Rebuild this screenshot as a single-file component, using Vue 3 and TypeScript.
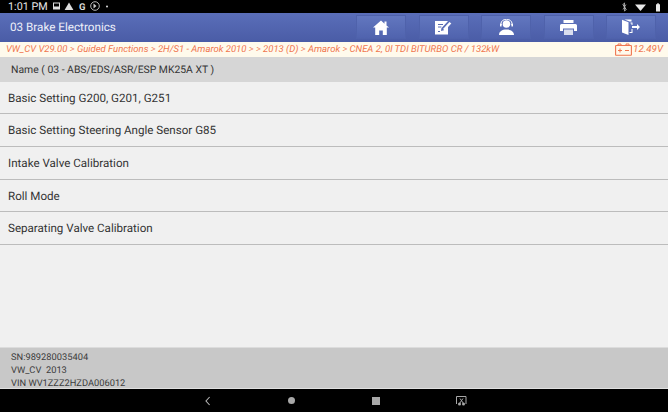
<script setup lang="ts">
const menuItems = [
  'Basic Setting G200, G201, G251',
  'Basic Setting Steering Angle Sensor G85',
  'Intake Valve Calibration',
  'Roll Mode',
  'Separating Valve Calibration',
]
const crumb =
  'VW_CV V29.00 > Guided Functions > 2H/S1 - Amarok 2010 > > 2013 (D) > Amarok > CNEA 2, 0l TDI BITURBO CR / 132kW'
const footerLines = ['SN:989280035404', 'VW_CV  2013', 'VIN WV1ZZZ2HZDA006012']
</script>

<template>
  <div class="screen">
    <div class="status">
      <span class="time">1:01 PM</span>
      <svg class="st" width="62" height="11" viewBox="0 0 62 11">
        <path d="M1 1.500h7v7H1z M2 5.500h5v-3H2z" fill="#ddd" fill-rule="evenodd" />
        <path d="M17 1.500l4.400 7.500h-8.800z" fill="#ddd" />
        <text x="27" y="9" class="g">G</text>
        <circle cx="43" cy="5" r="4.300" fill="none" stroke="#ccc" stroke-width="0.9" />
        <path d="M41.500 2.500l3 2.500-3 2.500z" fill="#ccc" />
        <circle cx="55" cy="5.500" r="1" fill="#ddd" />
      </svg>
      <span class="grow"></span>
      <svg width="40" height="10" viewBox="0 0 40 10">
        <path d="M2 2.500l3 5M5 2.500l-3 5M3.500 0.800v8.400l1.600-1.600-3-5L3.500 .8" fill="none" stroke="#bbb" stroke-width="0.8" />
        <path d="M14 2.600h11l-5.500 6.400z" fill="#e8e8e8" />
        <path d="M35 2.200h1.200v-1h1.600v1H39v7.300h-4z" fill="#e8e8e8" />
      </svg>
    </div>

    <header class="head">
      <span class="title">03 Brake Electronics</span>
      <nav class="tools">
        <button class="tool">
          <svg width="16" height="15" viewBox="0 0 16 15">
            <path d="M8 .6L0 7.600h2.200V15h4v-4.600h3.600V15h4V7.600H16l-2.500-2.200V1.400h-2v2.300z" fill="#fff" />
          </svg>
        </button>
        <button class="tool">
          <svg width="17" height="15" viewBox="0 0 17 15">
            <path d="M0 1h13l-2 2.200-4.600 5L6 11l2.800-.7L13 6v8.400H0z" fill="#fff" />
            <path d="M3 4.500h5M3 7h3.400M3 11.500h2" stroke="#5a6db3" stroke-width="1" />
            <path d="M8 9l6.500-7 1.800 1.600L9.800 10.600z" fill="#fff" />
          </svg>
        </button>
        <button class="tool">
          <svg width="17" height="16" viewBox="0 0 17 16">
            <circle cx="8.500" cy="5" r="3.800" fill="#fff" />
            <path d="M3 6V4.600a5.500 4.400 0 0 1 11 0V6" fill="none" stroke="#fff" stroke-width="1" />
            <rect x="2" y="4.600" width="1.600" height="3" rx=".7" fill="#fff" />
            <rect x="13.400" y="4.600" width="1.600" height="3" rx=".7" fill="#fff" />
            <path d="M1 16c0-3.400 3-5.400 7.500-5.400S16 12.600 16 16z" fill="#fff" />
          </svg>
        </button>
        <button class="tool">
          <svg width="17" height="15" viewBox="0 0 17 15">
            <path d="M3.500 0h10v3h-10z" fill="#fff" />
            <path d="M1.500 4h14A1.500 1.500 0 0 1 17 5.500V11h-3V8.500H3V11H0V5.500A1.500 1.500 0 0 1 1.500 4z" fill="#fff" />
            <path d="M4 9.500h9V15H4z" fill="#d9deef" />
          </svg>
        </button>
        <button class="tool">
          <svg width="18" height="16" viewBox="0 0 18 16">
            <path d="M0 .5h9.500v2H7.500L2.500 .5z" fill="#fff" />
            <path d="M0 .8l6.500 2.400V16L0 13.400z" fill="#fff" />
            <path d="M7.500 13h2v-3h1v4h-3zM8.500 3.500h2V6h-1V4.500h-1z" fill="#fff" />
            <path d="M10 7h5V5l3 3-3 3V9h-5z" fill="#fff" />
          </svg>
        </button>
      </nav>
    </header>

    <div class="crumb">
      <span class="crumb-text">{{ crumb }}</span>
      <span class="volt">
        <svg width="17" height="13" viewBox="0 0 17 13">
          <rect x=".6" y="2.500" width="15.800" height="9.800" rx=".6" fill="none" stroke="#f0764f" stroke-width="1.100" />
          <path d="M3 2V1h3v1M11 2V1h3v1" fill="none" stroke="#f0764f" stroke-width="1" />
          <path d="M3 7.500h4M5 5.500v4M10 7.500h4" stroke="#f0764f" stroke-width="1" />
        </svg>
        12.49V
      </span>
    </div>

    <div class="name-row">Name ( 03 - ABS/EDS/ASR/ESP MK25A XT )</div>

    <ul class="menu">
      <li v-for="item in menuItems" :key="item" class="menu-item">{{ item }}</li>
    </ul>

    <footer class="foot">
      <div v-for="line in footerLines" :key="line" class="foot-line">{{ line }}</div>
    </footer>

    <div class="navbar">
      <svg class="nav-ic" width="8" height="10" viewBox="0 0 8 10">
        <path d="M5.600 1L2 5l3.600 4" fill="none" stroke="#b5b5b5" stroke-width="1.100" />
      </svg>
      <span class="dot"></span>
      <span class="square"></span>
      <svg class="nav-ic" width="11" height="10" viewBox="0 0 11 10">
        <path d="M.5 8V.5h9.500V8" fill="none" stroke="#a8a8a8" stroke-width="1" />
        <circle cx="3.500" cy="8" r="1.500" fill="#a8a8a8" />
        <circle cx="7.500" cy="8" r="1.500" fill="#a8a8a8" />
        <path d="M3.500 7.500L7 2.500M7.500 7.500L4 2.500" stroke="#a8a8a8" stroke-width="1" />
      </svg>
    </div>
  </div>
</template>

<style scoped>
.screen {
  width: 668px;
  height: 412px;
  display: flex;
  flex-direction: column;
  overflow: hidden;
  background: #f0f0f0;
  font-family: Roboto, "Liberation Sans", sans-serif;
  text-rendering: geometricPrecision;
}
.status {
  height: 13px;
  flex: none;
  background: #000;
  color: #e6e6e6;
  display: flex;
  align-items: center;
  padding: 0 7px 0 8px;
  font-size: 11px;
}
.time {
  font-size: 10.800px;
  width: 38px;
  margin-right: 6px;
  white-space: nowrap;
}
.g {
  font-size: 9.500px;
  font-weight: 700;
  fill: #ddd;
}
.grow {
  flex: 1;
}
.head {
  height: 29px;
  flex: none;
  background: linear-gradient(#5a6eb9, #4a5ca6);
  display: flex;
  align-items: center;
  justify-content: space-between;
  padding: 0 12px 0 10px;
}
.title {
  color: #eef0fa;
  font-size: 11.700px;
  margin-top: -1px;
}
.tools {
  display: flex;
  gap: 12.500px;
}
.tool {
  width: 50px;
  height: 24px;
  padding: 0;
  border: 1px solid #4f62ab;
  background: linear-gradient(#6277bf, #5063ae);
  display: flex;
  align-items: center;
  justify-content: center;
  margin-top: -1px;
}
.crumb {
  height: 15px;
  flex: none;
  background: #fffaec;
  color: #f0764f;
  font-size: 9.500px;
  font-style: italic;
  display: flex;
  align-items: center;
  justify-content: space-between;
  padding: 0 5px 0 6px;
  white-space: nowrap;
}
.volt {
  display: flex;
  align-items: center;
  gap: 1px;
  font-size: 9.800px;
}
.name-row {
  height: 25px;
  flex: none;
  background: #d6d6d6;
  color: #333;
  font-size: 10.400px;
  display: flex;
  align-items: center;
  padding: 0 0 1px 11px;
  box-sizing: border-box;
}
.menu {
  flex: 1;
  margin: -0.3px 0 0;
  padding: 0;
  list-style: none;
  background: #f0f0f0;
}
.menu-item {
  height: 32.700px;
  box-sizing: border-box;
  border-bottom: 1px solid #bcbcbc;
  color: #333;
  font-size: 11.600px;
  display: flex;
  align-items: center;
  padding-left: 8px;
}
.foot {
  height: 42px;
  flex: none;
  background: #c8c8c8;
  border-top: 1px solid #dcdcdc;
  border-bottom: 1px solid #e0e0e0;
  box-sizing: border-box;
  padding: 4px 0 0 11px;
  color: #3c3c3c;
  font-size: 9.300px;
  line-height: 12.800px;
  white-space: pre;
}
.navbar {
  height: 23px;
  flex: none;
  background: #000;
  display: flex;
  align-items: center;
  padding-left: 204px;
}
.nav-ic {
  flex: none;
}
.dot {
  width: 7px;
  height: 7px;
  border-radius: 50%;
  background: #a8a8a8;
  margin-left: 76px;
}
.square {
  width: 8px;
  height: 8px;
  background: #a8a8a8;
  margin-left: 77px;
  margin-right: 76px;
}
</style>

<style>
html,
body {
  margin: 0;
  background: #f0f0f0;
}
</style>
